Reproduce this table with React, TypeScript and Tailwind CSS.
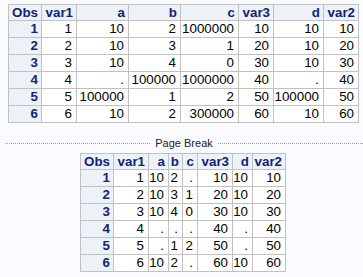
import React from "react";

type Col = { name: string; w: number };

const cols1: Col[] = [
  { name: "Obs", w: 33 },
  { name: "var1", w: 35 },
  { name: "a", w: 52 },
  { name: "b", w: 52 },
  { name: "c", w: 58 },
  { name: "var3", w: 35 },
  { name: "d", w: 50 },
  { name: "var2", w: 35 },
];

const cols2: Col[] = [
  { name: "Obs", w: 33 },
  { name: "var1", w: 35 },
  { name: "a", w: 20 },
  { name: "b", w: 14 },
  { name: "c", w: 15 },
  { name: "var3", w: 35 },
  { name: "d", w: 20 },
  { name: "var2", w: 33 },
];

const rows1 = [
  ["1", "1", "10", "2", "1000000", "10", "10", "10"],
  ["2", "2", "10", "3", "1", "20", "10", "20"],
  ["3", "3", "10", "4", "0", "30", "10", "30"],
  ["4", "4", ".", "100000", "1000000", "40", ".", "40"],
  ["5", "5", "100000", "1", "2", "50", "100000", "50"],
  ["6", "6", "10", "2", "300000", "60", "10", "60"],
];

const rows2 = [
  ["1", "1", "10", "2", ".", "10", "10", "10"],
  ["2", "2", "10", "3", "1", "20", "10", "20"],
  ["3", "3", "10", "4", "0", "30", "10", "30"],
  ["4", "4", ".", ".", ".", "40", ".", "40"],
  ["5", "5", ".", "1", "2", "50", ".", "50"],
  ["6", "6", "10", "2", ".", "60", "10", "60"],
];

function Table({ cols, rows, className }: { cols: Col[]; rows: string[][]; className?: string }) {
  const template = cols.map((c) => `${c.w}px`).join(" ");
  return (
    <div
      className={`grid w-max border-l border-t border-[#C1C1C1] text-[13.33px] ${className ?? ""}`}
      style={{ gridTemplateColumns: template, fontFamily: '"Liberation Sans", Arial, sans-serif' }}
    >
      {cols.map((c) => (
        <div
          key={"h" + c.name}
          className="flex h-[16px] items-center justify-end border-b border-r border-[#C1C1C1] bg-[#EDF2F9] pr-[3px] font-bold text-[#112277]"
        >
          {c.name}
        </div>
      ))}
      {rows.map((r, ri) =>
        r.map((v, ci) =>
          ci === 0 ? (
            <div
              key={ri + "-" + ci}
              className="flex h-[17px] items-center justify-end border-b border-r border-[#C1C1C1] bg-[#EDF2F9] pr-[3px] font-bold text-[#112277]"
            >
              {v}
            </div>
          ) : (
            <div
              key={ri + "-" + ci}
              className="flex h-[17px] items-center justify-end border-b border-r border-[#C1C1C1] bg-white pr-[4px] text-black"
            >
              {v}
            </div>
          )
        )
      )}
    </div>
  );
}

export default function App() {
  return (
    <div className="min-h-screen w-full bg-[#FAFBFE] pt-[4px]">
      <Table cols={cols1} rows={rows1} className="ml-[8px]" />
      <div className="mt-[14px] flex h-[12px] items-center gap-[5px] pl-[5px]">
        <div className="flex-1 border-t border-dotted border-[#A0A0A0]" />
        <span
          className="text-[11px] leading-none text-[#222]"
          style={{ fontFamily: '"Liberation Sans", Arial, sans-serif' }}
        >
          Page Break
        </span>
        <div className="flex-1 border-t border-dotted border-[#A0A0A0]" />
      </div>
      <Table cols={cols2} rows={rows2} className="ml-[80px] mt-[4px]" />
    </div>
  );
}
